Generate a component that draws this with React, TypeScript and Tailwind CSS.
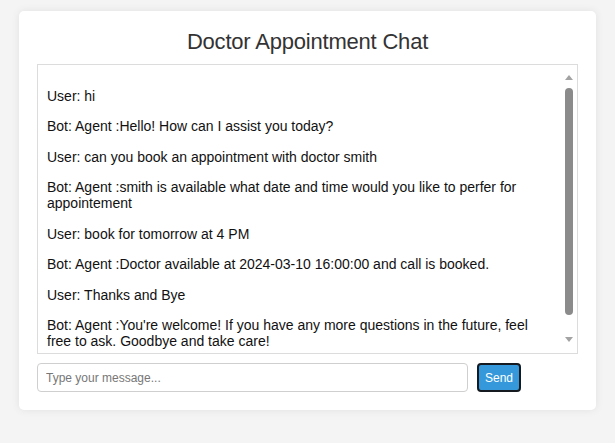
import React from "react";

const messages = [
  "User: hi",
  "Bot: Agent :Hello! How can I assist you today?",
  "User: can you book an appointment with doctor smith",
  "Bot: Agent :smith is available what date and time would you like to perfer for appointement",
  "User: book for tomorrow at 4 PM",
  "Bot: Agent :Doctor available at 2024-03-10 16:00:00 and call is booked.",
  "User: Thanks and Bye",
  "Bot: Agent :You're welcome! If you have any more questions in the future, feel free to ask. Goodbye and take care!",
];

export default function App() {
  return (
    <div
      className="min-h-[443px] w-full bg-[#f4f4f4] pt-[11px] px-[19px]"
      style={{ fontFamily: '"Liberation Sans", Arial, sans-serif' }}
    >
      <div className="w-[577px] bg-white rounded-[5px] shadow-[0_0_8px_rgba(0,0,0,0.08)] px-[18px] pt-[18px] pb-[18px]">
        <h2 className="text-center text-[22px] leading-[25px] text-[#333] mb-[10px] tracking-[-0.2px]">
          Doctor Appointment Chat
        </h2>
        <div className="h-[290px] border border-[#dcdcdc] flex overflow-hidden">
          <div className="flex-1 overflow-hidden pl-[9px] pr-[10px] pt-[8px]">
            {messages.map((m, i) => (
              <p key={i} className="text-[14px] leading-[16px] text-[#111] my-[14.5px]">
                {m}
              </p>
            ))}
          </div>
          <div className="w-[17px] flex flex-col items-center pt-[10px] pb-[11px]">
            <svg width="8" height="5" viewBox="0 0 8 5">
              <polygon points="4,0 8,5 0,5" fill="#a3a3a3" />
            </svg>
            <div className="w-[8px] h-[227px] mt-[8px] rounded-full bg-[#8b8b8b]" />
            <div className="flex-1" />
            <svg width="8" height="5" viewBox="0 0 8 5">
              <polygon points="0,0 8,0 4,5" fill="#a3a3a3" />
            </svg>
          </div>
        </div>
        <div className="flex items-center gap-[9px] mt-[9px]">
          <input
            type="text"
            placeholder="Type your message..."
            className="w-[431px] h-[29px] border border-[#cfcfcf] rounded-[4px] px-[8px] text-[12px] placeholder:text-[#777] outline-none"
          />
          <button className="h-[29px] px-[6px] bg-[#3498db] text-white text-[12px] rounded-[4px] border-2 border-[#141a20]">
            Send
          </button>
        </div>
      </div>
    </div>
  );
}
